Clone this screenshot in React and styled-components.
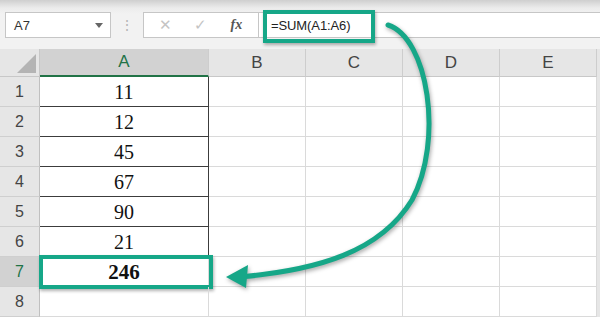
import React from "react";
import styled, { createGlobalStyle } from "styled-components";

const GREEN = "#16a788";
const XL_GREEN = "#217346";

const rows = [
  { n: 1, v: "11" },
  { n: 2, v: "12" },
  { n: 3, v: "45" },
  { n: 4, v: "67" },
  { n: 5, v: "90" },
  { n: 6, v: "21" },
  { n: 7, v: "246", sum: true },
  { n: 8, v: "" },
];

const cols = ["B", "C", "D", "E"];

const App = () => {
  return (
    <React.Fragment>
      <GlobalStyle />
      <Page>
        <Toolbar>
          <NameBox>
            A7
            <Caret />
          </NameBox>
          <Dots>⋮</Dots>
          <FxBox>
            <Ctl>✕</Ctl>
            <Ctl>✓</Ctl>
            <Fx>fx</Fx>
          </FxBox>
          <FormulaBar>
            <FormulaText>=SUM(A1:A6)</FormulaText>
            <Highlight />
          </FormulaBar>
        </Toolbar>

        <Sheet>
          <Corner>
            <CornerTri />
          </Corner>
          <ColHead active>A</ColHead>
          {cols.map((c) => (
            <ColHead key={c}>{c}</ColHead>
          ))}
          <Filler />

          {rows.map((r) => (
            <React.Fragment key={r.n}>
              <RowHead active={r.sum}>{r.n}</RowHead>
              <ValueCell boxed={r.n <= 6} first={r.n === 1} sum={r.sum}>
                {r.v}
                {r.sum && <Selection />}
              </ValueCell>
              {cols.map((c) => (
                <Cell key={c} />
              ))}
              <Filler />
            </React.Fragment>
          ))}
        </Sheet>

        <Arrow viewBox="0 0 600 321" width="600" height="321">
          <path
            d="M388 25 C 428 38, 444 140, 412 200 C 380 252, 318 270, 240 277"
            fill="none"
            stroke={GREEN}
            strokeWidth="5"
            strokeLinecap="round"
          />
          <polygon points="226,277 248,265 246,288" fill={GREEN} />
        </Arrow>
      </Page>
    </React.Fragment>
  );
};

export default App;

const GlobalStyle = createGlobalStyle`
  body {
    margin: 0;
    background: #ffffff;
    font-family: "Liberation Sans", Arial, sans-serif;
  }
`;

const Page = styled.div`
  position: relative;
  width: 600px;
  height: 321px;
  overflow: hidden;
  background: #ffffff;
`;

const Toolbar = styled.div`
  height: 49px;
  box-sizing: border-box;
  display: flex;
  align-items: flex-start;
  padding: 12px 0 0 5px;
  background: linear-gradient(#cfcfcf 0px, #ececec 8px, #f2f2f2 14px, #f2f2f2);
`;

const NameBox = styled.div`
  position: relative;
  width: 106px;
  height: 26px;
  box-sizing: border-box;
  background: #fff;
  border: 1px solid #c6c6c6;
  display: flex;
  align-items: center;
  padding-left: 8px;
  font-size: 13px;
  color: #333;
`;

const Caret = styled.span`
  position: absolute;
  right: 7px;
  top: 10px;
  width: 0;
  height: 0;
  border-left: 4px solid transparent;
  border-right: 4px solid transparent;
  border-top: 5px solid #666;
`;

const Dots = styled.div`
  width: 32px;
  height: 26px;
  display: flex;
  align-items: center;
  justify-content: center;
  color: #b5b5b5;
  font-size: 14px;
`;

const FxBox = styled.div`
  width: 115px;
  height: 26px;
  box-sizing: border-box;
  background: #fff;
  border: 1px solid #c6c6c6;
  border-right: none;
  display: flex;
  align-items: center;
  justify-content: space-around;
  padding: 0 4px;
`;

const Ctl = styled.span`
  color: #c4c4c4;
  font-size: 15px;
  width: 30px;
  text-align: center;
`;

const Fx = styled.span`
  font-family: "Liberation Serif", "Times New Roman", serif;
  font-style: italic;
  font-weight: bold;
  font-size: 14px;
  color: #555;
  width: 30px;
  text-align: center;
`;

const FormulaBar = styled.div`
  position: relative;
  flex: 1;
  height: 26px;
  box-sizing: border-box;
  background: #fff;
  border: 1px solid #c6c6c6;
  border-right: none;
  display: flex;
  align-items: center;
  padding-left: 12px;
  font-size: 13px;
  color: #222;
`;

const FormulaText = styled.span`
  letter-spacing: -0.1px;
`;

const Highlight = styled.div`
  position: absolute;
  left: 4px;
  top: -3px;
  width: 112px;
  height: 33px;
  box-sizing: border-box;
  border: 4px solid ${GREEN};
  box-shadow: 1px 2px 3px rgba(0, 0, 0, 0.3);
`;

const Sheet = styled.div`
  display: grid;
  grid-template-columns: 40px 169px 97px 97px 97px 97px 3px;
  grid-template-rows: 28px repeat(8, 30px);
  background: #fff;
`;

const Corner = styled.div`
  position: relative;
  background: #e6e6e6;
  border-right: 1px solid #c8c8c8;
  border-bottom: 1px solid #c8c8c8;
`;

const CornerTri = styled.div`
  position: absolute;
  right: 3px;
  bottom: 3px;
  width: 0;
  height: 0;
  border-left: 19px solid transparent;
  border-bottom: 19px solid #b4b4b4;
`;

const ColHead = styled.div`
  display: flex;
  align-items: center;
  justify-content: center;
  font-size: 17px;
  color: ${(p) => (p.active ? XL_GREEN : "#444")};
  background: ${(p) => (p.active ? "#d2d2d2" : "#e6e6e6")};
  border-right: 1px solid #cdcdcd;
  border-bottom: ${(p) => (p.active ? `2px solid ${XL_GREEN}` : "1px solid #c8c8c8")};
  box-sizing: border-box;
`;

const Filler = styled.div`
  background: #e6e6e6;
`;

const RowHead = styled.div`
  display: flex;
  align-items: center;
  justify-content: center;
  font-size: 16px;
  color: ${(p) => (p.active ? XL_GREEN : "#444")};
  background: ${(p) => (p.active ? "#d2d2d2" : "#e6e6e6")};
  border-right: 1px solid #c0c0c0;
  border-bottom: 1px solid #cfcfcf;
  box-sizing: border-box;
`;

const Cell = styled.div`
  border-right: 1px solid #dadada;
  border-bottom: 1px solid #dadada;
  box-sizing: border-box;
`;

const ValueCell = styled.div`
  position: relative;
  display: flex;
  align-items: center;
  justify-content: center;
  padding-top: 2px;
  box-sizing: border-box;
  font-family: "Liberation Serif", "Times New Roman", serif;
  font-size: ${(p) => (p.sum ? "21px" : "20px")};
  font-weight: ${(p) => (p.sum ? "bold" : "normal")};
  color: #111;
  border-right: 1px solid ${(p) => (p.boxed ? "#3c3c3c" : "#dadada")};
  border-bottom: 1px solid ${(p) => (p.boxed ? "#3c3c3c" : "#dadada")};
`;

const Selection = styled.div`
  position: absolute;
  left: -1px;
  top: -2px;
  right: -5px;
  bottom: -3px;
  border: 4px solid ${GREEN};
  box-shadow: 1px 2px 3px rgba(0, 0, 0, 0.3);
`;

const Arrow = styled.svg`
  position: absolute;
  left: 0;
  top: 0;
  pointer-events: none;
  filter: drop-shadow(1px 2px 2px rgba(0, 0, 0, 0.35));
`;
